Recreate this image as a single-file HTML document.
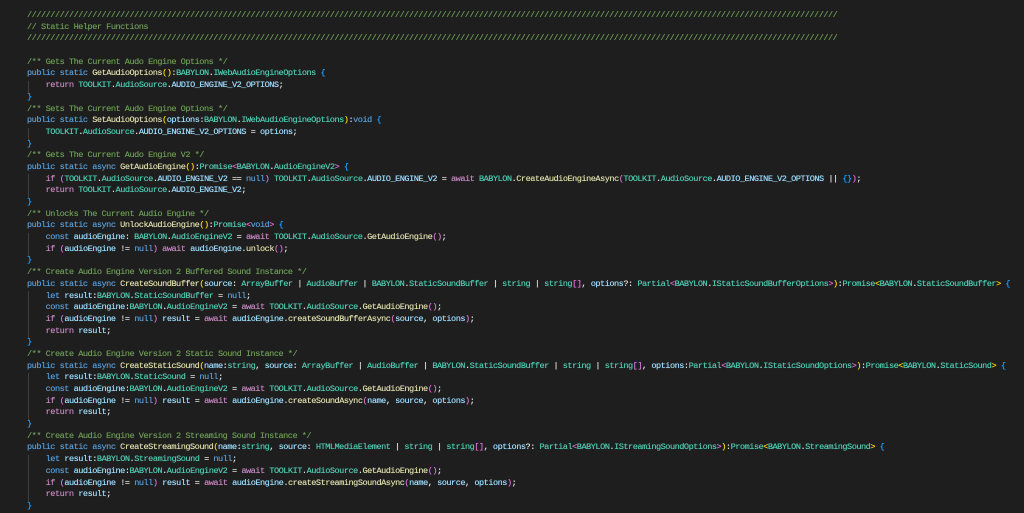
<!DOCTYPE html>
<html><head><meta charset="utf-8"><style>
html,body{margin:0;padding:0;background:#1e1e1e;width:1024px;height:512px;overflow:hidden}
pre{position:absolute;left:27px;top:10px;margin:0;font-family:"Liberation Mono",monospace;font-size:8.6px;letter-spacing:-0.5px;line-height:11.69px;color:#e0e0e0;white-space:pre;text-shadow:0 0 0.4px currentColor}
.c{color:#6a9955}.k{color:#569cd6}.p{color:#c586c0}.f{color:#dcdcaa}.t{color:#4ec9b0}.v{color:#9cdcfe}.y{color:#ffd700}.b{color:#da70d6}.q{color:#179fff}
.g{position:absolute;left:28px;width:1px;background:#404040}
</style></head><body>
<div class="g" style="top:81px;height:12px"></div>
<div class="g" style="top:128px;height:12px"></div>
<div class="g" style="top:174px;height:24px"></div>
<div class="g" style="top:233px;height:24px"></div>
<div class="g" style="top:291px;height:47px"></div>
<div class="g" style="top:373px;height:47px"></div>
<div class="g" style="top:455px;height:47px"></div>
<pre><span class="c">//////////////////////////////////////////////////////////////////////////////////////////////////////////////////////////////////////////////////////////////////////////////
// Static Helper Functions
//////////////////////////////////////////////////////////////////////////////////////////////////////////////////////////////////////////////////////////////////////////////</span>

<span class="c">/** Gets The Current Audo Engine Options */</span>
<span class="k">public static</span> <span class="f">GetAudioOptions</span><span class="y">()</span>:<span class="t">BABYLON</span>.<span class="t">IWebAudioEngineOptions</span> <span class="q">{</span>
    <span class="p">return</span> <span class="t">TOOLKIT</span>.<span class="t">AudioSource</span>.<span class="v">AUDIO_ENGINE_V2_OPTIONS</span>;
<span class="q">}</span>
<span class="c">/** Sets The Current Audo Engine Options */</span>
<span class="k">public static</span> <span class="f">SetAudioOptions</span><span class="y">(</span><span class="v">options</span>:<span class="t">BABYLON</span>.<span class="t">IWebAudioEngineOptions</span><span class="y">)</span>:<span class="k">void</span> <span class="q">{</span>
    <span class="t">TOOLKIT</span>.<span class="t">AudioSource</span>.<span class="v">AUDIO_ENGINE_V2_OPTIONS</span> = <span class="v">options</span>;
<span class="q">}</span>
<span class="c">/** Gets The Current Audo Engine V2 */</span>
<span class="k">public static async</span> <span class="f">GetAudioEngine</span><span class="y">()</span>:<span class="t">Promise</span><span class="b">&lt;</span><span class="t">BABYLON</span>.<span class="t">AudioEngineV2</span><span class="b">&gt;</span> <span class="q">{</span>
    <span class="p">if</span> <span class="b">(</span><span class="t">TOOLKIT</span>.<span class="t">AudioSource</span>.<span class="v">AUDIO_ENGINE_V2</span> == <span class="k">null</span><span class="b">)</span> <span class="t">TOOLKIT</span>.<span class="t">AudioSource</span>.<span class="v">AUDIO_ENGINE_V2</span> = <span class="p">await</span> <span class="t">BABYLON</span>.<span class="f">CreateAudioEngineAsync</span><span class="b">(</span><span class="t">TOOLKIT</span>.<span class="t">AudioSource</span>.<span class="v">AUDIO_ENGINE_V2_OPTIONS</span> || <span class="q">{}</span><span class="b">)</span>;
    <span class="p">return</span> <span class="t">TOOLKIT</span>.<span class="t">AudioSource</span>.<span class="v">AUDIO_ENGINE_V2</span>;
<span class="q">}</span>
<span class="c">/** Unlocks The Current Audio Engine */</span>
<span class="k">public static async</span> <span class="f">UnlockAudioEngine</span><span class="y">()</span>:<span class="t">Promise</span><span class="b">&lt;</span><span class="k">void</span><span class="b">&gt;</span> <span class="q">{</span>
    <span class="k">const</span> <span class="v">audioEngine</span>: <span class="t">BABYLON</span>.<span class="t">AudioEngineV2</span> = <span class="p">await</span> <span class="t">TOOLKIT</span>.<span class="t">AudioSource</span>.<span class="f">GetAudioEngine</span><span class="b">()</span>;
    <span class="p">if</span> <span class="b">(</span><span class="v">audioEngine</span> != <span class="k">null</span><span class="b">)</span> <span class="p">await</span> <span class="v">audioEngine</span>.<span class="f">unlock</span><span class="b">()</span>;
<span class="q">}</span>
<span class="c">/** Create Audio Engine Version 2 Buffered Sound Instance */</span>
<span class="k">public static async</span> <span class="f">CreateSoundBuffer</span><span class="y">(</span><span class="v">source</span>: <span class="t">ArrayBuffer</span> | <span class="t">AudioBuffer</span> | <span class="t">BABYLON</span>.<span class="t">StaticSoundBuffer</span> | <span class="t">string</span> | <span class="t">string</span><span class="b">[]</span>, <span class="v">options</span>?: <span class="t">Partial</span><span class="b">&lt;</span><span class="t">BABYLON</span>.<span class="t">IStaticSoundBufferOptions</span><span class="b">&gt;</span><span class="y">)</span>:<span class="t">Promise</span><span class="y">&lt;</span><span class="t">BABYLON</span>.<span class="t">StaticSoundBuffer</span><span class="y">&gt;</span> <span class="q">{</span>
    <span class="k">let</span> <span class="v">result</span>:<span class="t">BABYLON</span>.<span class="t">StaticSoundBuffer</span> = <span class="k">null</span>;
    <span class="k">const</span> <span class="v">audioEngine</span>:<span class="t">BABYLON</span>.<span class="t">AudioEngineV2</span> = <span class="p">await</span> <span class="t">TOOLKIT</span>.<span class="t">AudioSource</span>.<span class="f">GetAudioEngine</span><span class="b">()</span>;
    <span class="p">if</span> <span class="b">(</span><span class="v">audioEngine</span> != <span class="k">null</span><span class="b">)</span> <span class="v">result</span> = <span class="p">await</span> <span class="v">audioEngine</span>.<span class="f">createSoundBufferAsync</span><span class="b">(</span><span class="v">source</span>, <span class="v">options</span><span class="b">)</span>;
    <span class="p">return</span> <span class="v">result</span>;
<span class="q">}</span>
<span class="c">/** Create Audio Engine Version 2 Static Sound Instance */</span>
<span class="k">public static async</span> <span class="f">CreateStaticSound</span><span class="y">(</span><span class="v">name</span>:<span class="t">string</span>, <span class="v">source</span>: <span class="t">ArrayBuffer</span> | <span class="t">AudioBuffer</span> | <span class="t">BABYLON</span>.<span class="t">StaticSoundBuffer</span> | <span class="t">string</span> | <span class="t">string</span><span class="b">[]</span>, <span class="v">options</span>:<span class="t">Partial</span><span class="b">&lt;</span><span class="t">BABYLON</span>.<span class="t">IStaticSoundOptions</span><span class="b">&gt;</span><span class="y">)</span>:<span class="t">Promise</span><span class="y">&lt;</span><span class="t">BABYLON</span>.<span class="t">StaticSound</span><span class="y">&gt;</span> <span class="q">{</span>
    <span class="k">let</span> <span class="v">result</span>:<span class="t">BABYLON</span>.<span class="t">StaticSound</span> = <span class="k">null</span>;
    <span class="k">const</span> <span class="v">audioEngine</span>:<span class="t">BABYLON</span>.<span class="t">AudioEngineV2</span> = <span class="p">await</span> <span class="t">TOOLKIT</span>.<span class="t">AudioSource</span>.<span class="f">GetAudioEngine</span><span class="b">()</span>;
    <span class="p">if</span> <span class="b">(</span><span class="v">audioEngine</span> != <span class="k">null</span><span class="b">)</span> <span class="v">result</span> = <span class="p">await</span> <span class="v">audioEngine</span>.<span class="f">createSoundAsync</span><span class="b">(</span><span class="v">name</span>, <span class="v">source</span>, <span class="v">options</span><span class="b">)</span>;
    <span class="p">return</span> <span class="v">result</span>;
<span class="q">}</span>
<span class="c">/** Create Audio Engine Version 2 Streaming Sound Instance */</span>
<span class="k">public static async</span> <span class="f">CreateStreamingSound</span><span class="y">(</span><span class="v">name</span>:<span class="t">string</span>, <span class="v">source</span>: <span class="t">HTMLMediaElement</span> | <span class="t">string</span> | <span class="t">string</span><span class="b">[]</span>, <span class="v">options</span>?: <span class="t">Partial</span><span class="b">&lt;</span><span class="t">BABYLON</span>.<span class="t">IStreamingSoundOptions</span><span class="b">&gt;</span><span class="y">)</span>:<span class="t">Promise</span><span class="y">&lt;</span><span class="t">BABYLON</span>.<span class="t">StreamingSound</span><span class="y">&gt;</span> <span class="q">{</span>
    <span class="k">let</span> <span class="v">result</span>:<span class="t">BABYLON</span>.<span class="t">StreamingSound</span> = <span class="k">null</span>;
    <span class="k">const</span> <span class="v">audioEngine</span>:<span class="t">BABYLON</span>.<span class="t">AudioEngineV2</span> = <span class="p">await</span> <span class="t">TOOLKIT</span>.<span class="t">AudioSource</span>.<span class="f">GetAudioEngine</span><span class="b">()</span>;
    <span class="p">if</span> <span class="b">(</span><span class="v">audioEngine</span> != <span class="k">null</span><span class="b">)</span> <span class="v">result</span> = <span class="p">await</span> <span class="v">audioEngine</span>.<span class="f">createStreamingSoundAsync</span><span class="b">(</span><span class="v">name</span>, <span class="v">source</span>, <span class="v">options</span><span class="b">)</span>;
    <span class="p">return</span> <span class="v">result</span>;
<span class="q">}</span></pre>
</body></html>
